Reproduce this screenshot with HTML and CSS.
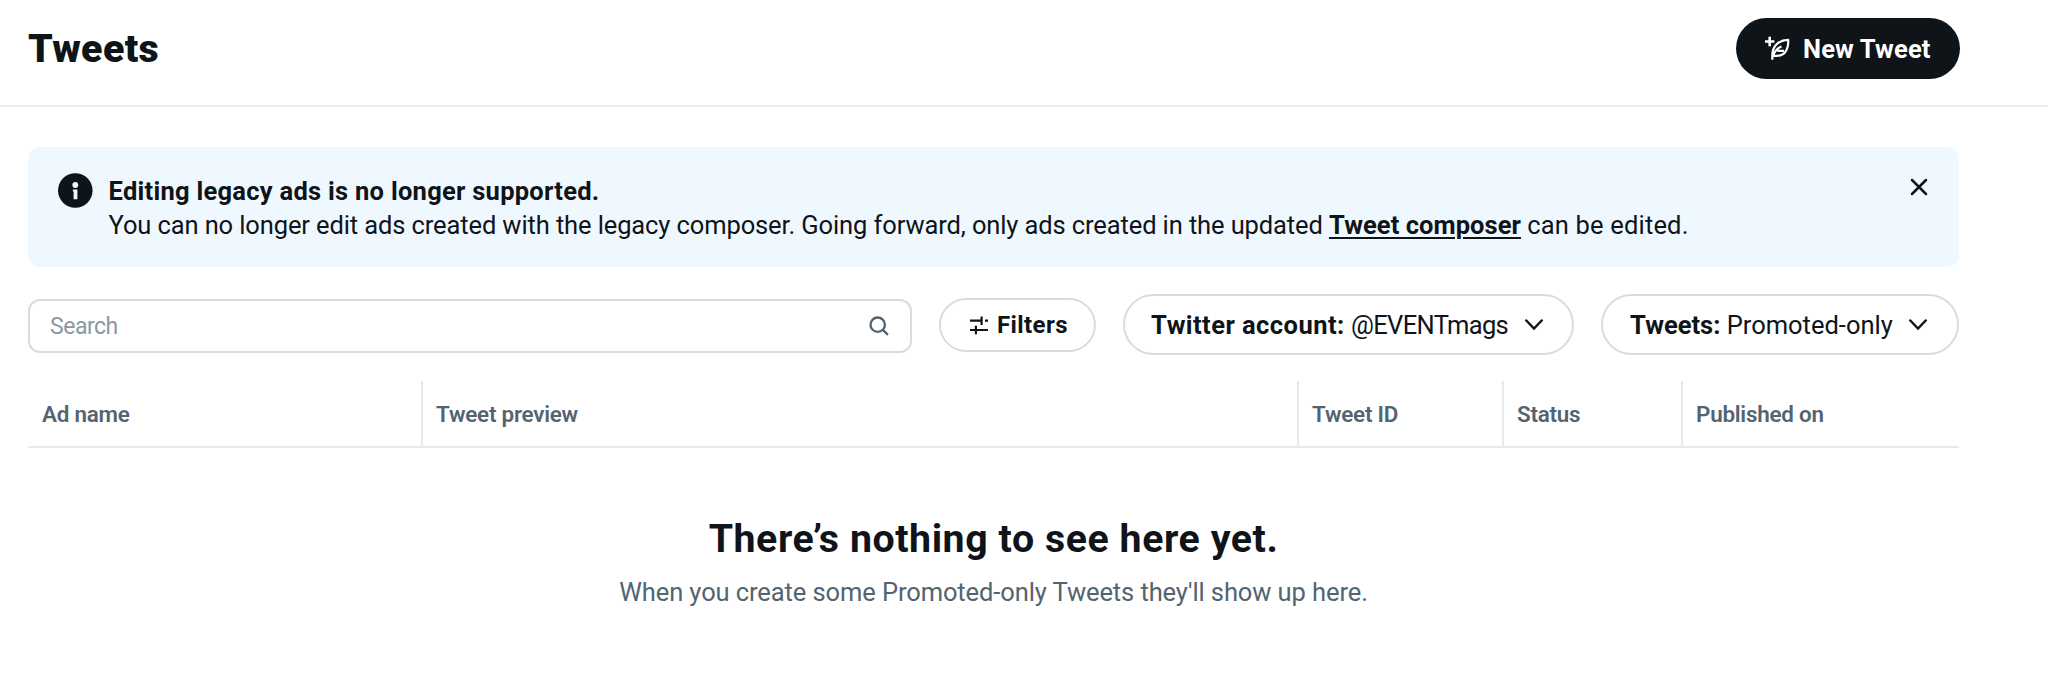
FILE: index.html
```
<!DOCTYPE html>
<html lang="en">
<head>
<meta charset="utf-8">
<title>Tweets</title>
<link rel="stylesheet" href="styles.css">
</head>
<body>
<header class="topbar">
  <h1 class="page-title">Tweets</h1>
  <button class="new-tweet">
    <svg class="feather-icon" width="26" height="26" viewBox="0 0 26 26" fill="none" stroke="currentColor" stroke-width="2.2" stroke-linecap="butt" stroke-linejoin="round">
      <path d="M4.700 .8v9.400M0 5.500h9.400" stroke-width="2.600"/>
      <path d="M7.300 23.800V19.500C7.300 10 13.500 4 23.200 3.900C23.500 9 22.500 13.500 19.500 17C17 19.800 13 20.200 7.500 20.200M8 20C9.500 15.500 12.500 12 16.500 10.500M12.500 14.800H19"/>
    </svg>
    <span>New Tweet</span>
  </button>
</header>
<main class="content">
  <section class="banner">
    <svg class="info-icon" width="35" height="35" viewBox="0 0 35 35">
      <circle cx="17.300" cy="17.500" r="17.300" fill="#0f1419"/>
      <circle cx="17.300" cy="12" r="2.900" fill="#f0f8ff"/>
      <path d="M14.900 16.500h4.500V26.300h-3.800V18.500h-.7z" fill="#f0f8ff"/>
    </svg>
    <div class="banner-text">
      <p class="banner-title">Editing legacy ads is no longer supported.</p>
      <p class="banner-body">You can no longer edit ads created with the legacy composer. Going forward, only ads created in the updated <a class="link">Tweet composer</a> <span class="tail">can be edited.</span></p>
    </div>
    <svg class="close-icon" width="18" height="18" viewBox="0 0 18 18" fill="none" stroke="#0f1419" stroke-width="2.500" stroke-linecap="round"><path d="M2 2l14 14M16 2L2 16"/></svg>
  </section>
  <div class="toolbar">
    <div class="search">
      <span>Search</span>
      <svg width="20" height="20" viewBox="0 0 20 20" fill="none" stroke="#536471" stroke-width="2.300"><circle cx="8.700" cy="8.700" r="7.200"/><path d="M13.900 13.900l5 5"/></svg>
    </div>
    <button class="pill filters">
      <svg width="20" height="20" viewBox="0 0 20 20" fill="none" stroke="#0f1419" stroke-width="2.200"><path d="M1 5.700h12.500M16 5.700h3M12.600 1.500v8.400M1 15h5M8 15h11M6.900 10.800v8.400"/></svg>
      <span>Filters</span>
    </button>
    <button class="pill select account">
      <span><b class="account-label">Twitter account:</b> <span class="account-name">@EVENTmags</span></span>
      <svg width="20" height="12" viewBox="0 0 20 12" fill="none" stroke="#0f1419" stroke-width="2.500" stroke-linecap="round"><path d="M2.300 1.500L10 9.500L17.700 1.500"/></svg>
    </button>
    <button class="pill select kind">
      <span><b>Tweets:</b> <span>Promoted-only</span></span>
      <svg width="20" height="12" viewBox="0 0 20 12" fill="none" stroke="#0f1419" stroke-width="2.500" stroke-linecap="round"><path d="M2.300 1.500L10 9.500L17.700 1.500"/></svg>
    </button>
  </div>
  <div class="table-head">
    <div class="cell">Ad name</div>
    <div class="cell">Tweet preview</div>
    <div class="cell">Tweet ID</div>
    <div class="cell">Status</div>
    <div class="cell">Published on</div>
  </div>
  <section class="empty">
    <h2 class="empty-title">There’s nothing to see here yet.</h2>
    <p class="empty-text">When you create some Promoted-only Tweets they'll show up here.</p>
  </section>
</main>
</body>
</html>
```
FILE: styles.css
```
* { box-sizing: border-box; }
body {
  margin: 0;
  background: #fff;
  color: #0f1419;
  font-family: Roboto, "Liberation Sans", sans-serif;
  font-size: 25.5px;
}
h1, h2, p { margin: 0; }
button { font: inherit; color: inherit; margin: 0; }
svg { display: block; flex: none; }
.topbar {
  display: flex;
  justify-content: space-between;
  align-items: flex-start;
  height: 107px;
  padding: 18px 88px 0 28px;
  border-bottom: 2px solid #e9ebec;
}
.page-title {
  margin-top: 6px;
  font-size: 39.3px;
  line-height: 50px;
  font-weight: 900;
  letter-spacing: 0.35px;
}
.new-tweet {
  display: flex;
  align-items: center;
  gap: 12px;
  width: 224px;
  height: 61px;
  padding: 0 0 0 29px;
  border: 0;
  border-radius: 31px;
  background: #0f1419;
  color: #fff;
  font-weight: 700;
  letter-spacing: 0.15px;
}
.content { padding: 40px 89px 0 28px; }
.banner {
  display: flex;
  height: 120px;
  padding: 26px 31px 0 30px;
  border-radius: 12px;
  background: #f0f8ff;
}
.banner-text {
  flex: 1;
  padding-top: 2px;
  margin-left: 15.5px;
  line-height: 33.500px;
  white-space: nowrap;
}
.banner-title { font-weight: 700; letter-spacing: 0.27px; }
.banner-body { letter-spacing: -0.114px; }
.link {
  font-weight: 700;
  letter-spacing: 0.063px;
  text-decoration: underline;
  text-decoration-thickness: 2px;
  text-underline-offset: 3px;
}
.tail { letter-spacing: 0.18px; }
.close-icon { margin-top: 5px; }
.toolbar {
  display: flex;
  align-items: center;
  gap: 27px;
  height: 61px;
  margin-top: 27px;
}
.search {
  flex: 1;
  display: flex;
  align-items: center;
  justify-content: space-between;
  height: 54px;
  margin-top: 3px;
  padding: 0 21px 0 20px;
  border: 2px solid #d5dde3;
  border-radius: 12px;
  color: #8899a6;
  font-size: 23px;
  letter-spacing: -0.485px;
}
.pill {
  display: flex;
  align-items: center;
  border: 2px solid #d5dde3;
  border-radius: 31px;
  background: #fff;
  white-space: nowrap;
}
.filters {
  width: 157px;
  height: 54px;
  gap: 8px;
  padding: 0 0 0 28px;
  font-size: 24px;
  font-weight: 700;
  letter-spacing: 0.4px;
}
.select {
  height: 61px;
  justify-content: space-between;
  padding: 0 28px 0 26px;
}
.account { width: 451px; }
.kind { width: 358px; padding: 0 29px 0 27px; }
.account-label { letter-spacing: 0.455px; }
.account-name { letter-spacing: -0.64px; }
.table-head {
  display: grid;
  grid-template-columns: 393px 876px 205px 179px 1fr;
  height: 67px;
  margin-top: 26px;
  border-bottom: 2px solid #e6eaed;
}
.cell {
  padding-left: 13px;
  border-left: 2px solid #e6eaed;
  color: #536471;
  font-size: 22.400px;
  font-weight: 600;
  line-height: 67px;
  letter-spacing: -0.230px;
}
.cell:first-child { border-left-color: transparent; padding-left: 12px; }
.empty {
  padding-top: 66px;
  text-align: center;
}
.empty-title {
  font-size: 39.3px;
  line-height: 50px;
  font-weight: 700;
  letter-spacing: 0.561px;
}
.empty-text {
  margin-top: 12px;
  color: #536471;
  line-height: 33px;
  letter-spacing: -0.094px;
}
```
